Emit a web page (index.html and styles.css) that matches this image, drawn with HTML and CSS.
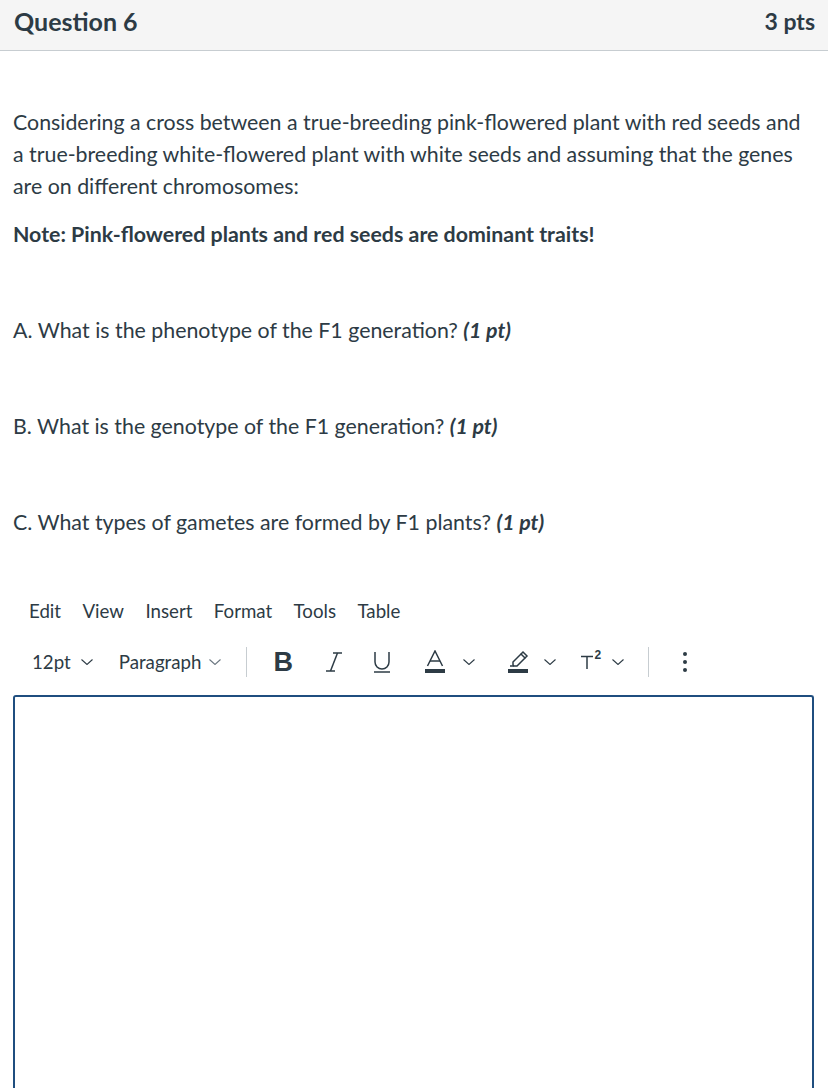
FILE: index.html
```html
<!DOCTYPE html>
<html>
  <head>
    <title>Question 6</title>
    <meta charset="utf-8">
    <link rel="stylesheet" href="styles.css">
  </head>
<body>
  <header class="q_header">
    <h1>Question 6</h1>
    <span class="pts">3 pts</span>
  </header>

  <div class="q_text">
    <p>Considering a cross between a true-breeding pink-flowered plant with red seeds and a true-breeding white-flowered plant with white seeds and assuming that the genes are on different chromosomes:</p>
    <p class="note"><strong>Note: Pink-flowered plants and red seeds are dominant traits!</strong></p>
    <p class="part">A. What is the phenotype of the F1 generation? <strong><em>(1 pt)</em></strong></p>
    <p class="part">B. What is the genotype of the F1 generation? <strong><em>(1 pt)</em></strong></p>
    <p class="part">C. What types of gametes are formed by F1 plants? <strong><em>(1 pt)</em></strong></p>
  </div>

  <div class="editor">
    <div class="menubar">
      <span>Edit</span>
      <span>View</span>
      <span>Insert</span>
      <span>Format</span>
      <span>Tools</span>
      <span>Table</span>
    </div>

    <div class="toolbar">
      <div class="tb_group">
        <span class="tb_select size">12pt <svg class="chev" width="12" height="6" viewBox="0 0 12 6"><polyline points="0.5,0.5 6,5.5 11.5,0.5" /></svg></span>
        <span class="tb_select para">Paragraph <svg class="chev light" width="12" height="6" viewBox="0 0 12 6"><polyline points="0.5,0.5 6,5.5 11.5,0.5" /></svg></span>
      </div>
      <div class="tb_group bordered">
        <span class="tb_bt bold">B</span>
        <span class="tb_bt italic">
          <svg width="20" height="22" viewBox="0 0 20 22" class="ico">
            <line x1="9" y1="2" x2="18" y2="2" />
            <line x1="2" y1="20" x2="11" y2="20" />
            <line x1="13.5" y1="2" x2="6.5" y2="20" />
          </svg>
        </span>
        <span class="tb_bt under">
          <svg width="20" height="24" viewBox="0 0 20 24" class="ico">
            <path d="M3 2 V12 A7 7 0 0 0 17 12 V2" />
            <line x1="2" y1="22" x2="18" y2="22" />
          </svg>
        </span>
        <span class="tb_bt color">
          <svg width="22" height="24" viewBox="0 0 22 24" class="ico">
            <path d="M3.5 16 L11 1 L18.5 16" />
            <line x1="6" y1="11" x2="16" y2="11" />
            <rect x="1" y="19" width="20" height="4" class="fill" />
          </svg>
          <svg class="chev" width="12" height="6" viewBox="0 0 12 6"><polyline points="0.5,0.5 6,5.5 11.5,0.5" /></svg>
        </span>
        <span class="tb_bt hilite">
          <svg width="22" height="24" viewBox="0 0 22 24" class="ico">
            <path d="M6 12 L14 4 L18 8 L10 16 L7 16 L6 15 Z" />
            <path d="M14 4 L16 2 L20 6 L18 8" />
            <line x1="3" y1="16" x2="7" y2="16" />
            <rect x="1" y="19" width="20" height="4" class="fill" />
          </svg>
          <svg class="chev" width="12" height="6" viewBox="0 0 12 6"><polyline points="0.5,0.5 6,5.5 11.5,0.5" /></svg>
        </span>
        <span class="tb_bt sup">
          <svg width="26" height="26" viewBox="0 0 26 26" class="ico">
            <line x1="3" y1="7.5" x2="15" y2="7.5" />
            <line x1="9" y1="7.5" x2="9" y2="20" />
            <text x="16.5" y="9.5" class="sup_num">2</text>
          </svg>
          <svg class="chev" width="12" height="6" viewBox="0 0 12 6"><polyline points="0.5,0.5 6,5.5 11.5,0.5" /></svg>
        </span>
      </div>
      <div class="tb_group bordered">
        <span class="tb_bt more">
          <svg width="6" height="22" viewBox="0 0 6 22">
            <circle cx="3" cy="3" r="2" />
            <circle cx="3" cy="11" r="2" />
            <circle cx="3" cy="19" r="2" />
          </svg>
        </span>
      </div>
    </div>

    <div class="edit_area"></div>
  </div>
</body>
</html>
```

FILE: styles.css
```css
* { margin: 0; padding: 0; box-sizing: border-box; }
body { font-family: Lato, "Open Sans", sans-serif; color: #2d3b45; background: #fff; }

.q_header { display: flex; justify-content: space-between; align-items: center; height: 51px; padding: 0 13px 9px 14px; background: #f5f5f5; border-bottom: 1px solid #c7cdd1; }
.q_header h1 { font-size: 25px; font-weight: 700; }
.q_header .pts { font-size: 23px; font-weight: 700; }

.q_text { padding: 55px 14px 0 13px; font-size: 21.35px; line-height: 32px; }
.q_text .note { margin-top: 16px; }
.q_text .part { margin-top: 64px; }

.editor { margin-top: 52px; }
.menubar { display: flex; align-items: center; height: 42px; padding-left: 29px; gap: 21.4px; font-size: 18.7px; }

.toolbar { display: flex; align-items: center; height: 46px; margin-top: 7px; padding-left: 32px; }
.tb_group { display: flex; align-items: center; height: 30px; }
.tb_group.bordered { border-left: 1px solid #c7cdd1; }
.tb_select { display: flex; align-items: center; font-size: 18.7px; }
.tb_select .chev { margin-left: 10px; }
.tb_select.size { margin-right: 26px; }
.tb_select.para { margin-right: 25px; }
.tb_select.para .chev { margin-left: 8px; }

.tb_bt { display: flex; align-items: center; }
.tb_bt.bold { font-family: "Liberation Sans", Arial, sans-serif; font-weight: 700; font-size: 27px; margin-left: 26px; }
.tb_bt.italic { margin-left: 31px; }
.tb_bt.under { margin-left: 28px; }
.tb_bt.color { margin-left: 32px; }
.tb_bt.color .chev { margin-left: 17px; }
.tb_bt.hilite { margin-left: 32px; }
.tb_bt.hilite .chev { margin-left: 15px; }
.tb_bt.sup { margin-left: 22px; margin-right: 24px; }
.tb_bt.sup .chev { margin-left: 8px; }
.tb_bt.more { margin-left: 33px; fill: #2d3b45; }

.chev { fill: none; stroke: #2d3b45; stroke-width: 1.1; }
.chev.light { stroke: #6b7780; }
.ico { fill: none; stroke: #2d3b45; stroke-width: 1.5; }
.ico .fill { fill: #2d3b45; stroke: none; }
.ico .sup_num { font-family: "Liberation Sans", Arial, sans-serif; font-weight: 700; font-size: 12px; fill: #2d3b45; stroke: none; }

.edit_area { height: 420px; margin: 10px 14px 0 13px; border: 2px solid #1f4e7f; border-bottom: none; border-radius: 3px 3px 0 0; }
```
